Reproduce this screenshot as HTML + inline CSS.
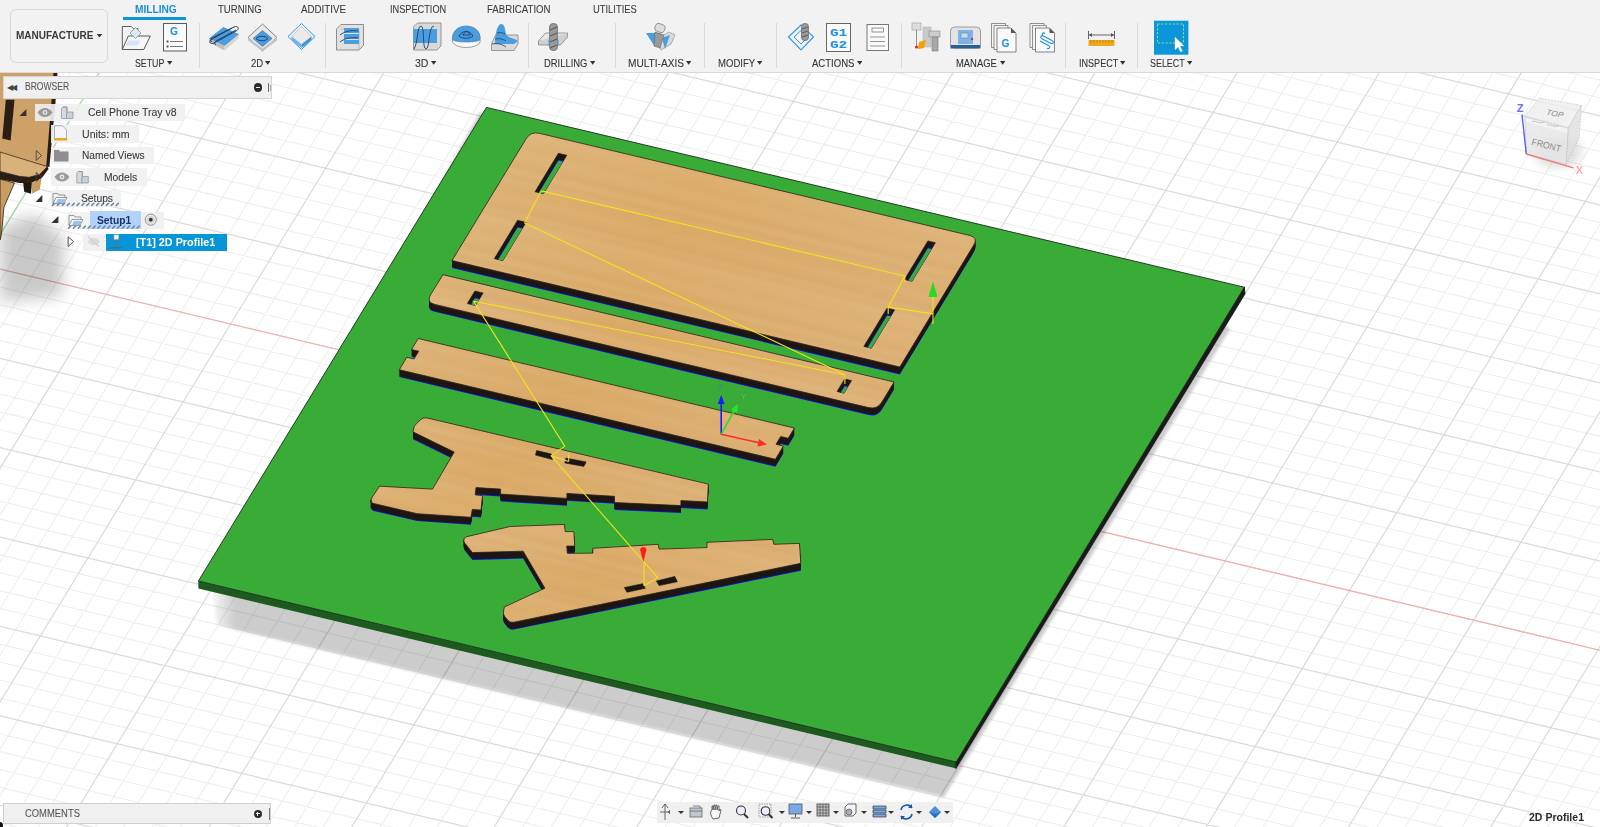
<!DOCTYPE html>
<html><head><meta charset="utf-8"><title>Fusion Manufacture</title>
<style>
html,body{margin:0;padding:0;width:1600px;height:827px;overflow:hidden;background:#fff;font-family:"Liberation Sans",sans-serif;}
#vp{position:absolute;left:0;top:0;width:1600px;height:827px;overflow:hidden}
</style></head><body>
<div id="vp"><svg width="1600" height="827" viewBox="0 0 1600 827" style="position:absolute;left:0;top:0">
<defs>
<filter id="blur2" x="-10%" y="-10%" width="120%" height="120%"><feGaussianBlur stdDeviation="1.6"/></filter>
<linearGradient id="shg" gradientUnits="userSpaceOnUse" x1="208" y1="0" x2="236" y2="0"><stop offset="0" stop-color="#000" stop-opacity="0"/><stop offset="1" stop-color="#000" stop-opacity="0.2"/></linearGradient>
<filter id="blur3" x="-10%" y="-10%" width="120%" height="120%"><feGaussianBlur stdDeviation="3"/></filter>
<filter id="blur5" x="-50%" y="-50%" width="200%" height="200%"><feGaussianBlur stdDeviation="5"/></filter>
<filter id="blur8" x="-50%" y="-50%" width="200%" height="200%"><feGaussianBlur stdDeviation="8"/></filter>
<filter id="blur12" x="-50%" y="-50%" width="200%" height="200%"><feGaussianBlur stdDeviation="12"/></filter>
<pattern id="grain" patternUnits="userSpaceOnUse" width="600" height="90" patternTransform="rotate(13.3)"><rect x="0" y="0.0" width="600" height="4.3" fill="#ffffff" opacity="0.009"/><rect x="0" y="4.3" width="600" height="2.9" fill="#a87838" opacity="0.032"/><rect x="0" y="7.2" width="600" height="5.7" fill="#ffffff" opacity="0.055"/><rect x="0" y="12.9" width="600" height="2.7" fill="#ffffff" opacity="0.026"/><rect x="0" y="15.6" width="600" height="3.8" fill="#ffffff" opacity="0.033"/><rect x="0" y="19.4" width="600" height="7.0" fill="#ffffff" opacity="0.007"/><rect x="0" y="26.5" width="600" height="6.0" fill="#ffffff" opacity="0.035"/><rect x="0" y="32.4" width="600" height="5.7" fill="#ffffff" opacity="0.024"/><rect x="0" y="38.1" width="600" height="2.8" fill="#a87838" opacity="0.052"/><rect x="0" y="40.9" width="600" height="4.8" fill="#a87838" opacity="0.032"/><rect x="0" y="45.7" width="600" height="5.6" fill="#ffffff" opacity="0.041"/><rect x="0" y="51.2" width="600" height="5.7" fill="#a87838" opacity="0.038"/><rect x="0" y="56.9" width="600" height="3.0" fill="#ffffff" opacity="0.043"/><rect x="0" y="60.0" width="600" height="5.9" fill="#a87838" opacity="0.030"/><rect x="0" y="65.9" width="600" height="6.8" fill="#a87838" opacity="0.028"/><rect x="0" y="72.7" width="600" height="4.5" fill="#ffffff" opacity="0.015"/><rect x="0" y="77.2" width="600" height="6.3" fill="#a87838" opacity="0.015"/><rect x="0" y="83.5" width="600" height="5.4" fill="#a87838" opacity="0.053"/><rect x="0" y="88.9" width="600" height="4.1" fill="#ffffff" opacity="0.059"/></pattern><filter id="gblur"><feGaussianBlur stdDeviation="1.5"/></filter>
<linearGradient id="wood" x1="0" y1="0" x2="1" y2="0.3"><stop offset="0" stop-color="#deb47a"/><stop offset="0.5" stop-color="#dbab69"/><stop offset="1" stop-color="#ddb074"/></linearGradient>
</defs>
<rect width="1600" height="827" fill="#fff"/>
<path d="M-818.4,-1172.7L-1968.6,695.6M-793.5,-1166.7L-1943.6,701.5M-768.7,-1160.8L-1918.6,707.5M-743.9,-1154.9L-1893.6,713.4M-694.2,-1143L-1843.6,725.3M-669.4,-1137.1L-1818.6,731.2M-644.5,-1131.1L-1793.7,737.2M-619.7,-1125.2L-1768.7,743.1M-570,-1113.3L-1718.7,755M-545.2,-1107.4L-1693.7,760.9M-520.4,-1101.4L-1668.7,766.9M-495.5,-1095.5L-1643.7,772.8M-445.9,-1083.6L-1593.8,784.7M-421,-1077.7L-1568.8,790.6M-396.2,-1071.8L-1543.8,796.6M-371.4,-1065.8L-1518.8,802.5M-321.7,-1054L-1468.8,814.4M-296.9,-1048L-1443.9,820.3M-272.1,-1042.1L-1418.9,826.2M-247.3,-1036.2L-1393.9,832.2M-197.6,-1024.3L-1343.9,844.1M-172.8,-1018.4L-1319,850M-148,-1012.5L-1294,855.9M-123.2,-1006.5L-1269,861.9M-73.5,-994.7L-1219.1,873.7M-48.7,-988.7L-1194.1,879.7M-23.9,-982.8L-1169.1,885.6M0.9,-976.9L-1144.2,891.6M50.5,-965L-1094.2,903.4M75.4,-959.1L-1069.2,909.4M100.2,-953.1L-1044.3,915.3M125,-947.2L-1019.3,921.2M174.6,-935.4L-969.4,933.1M199.4,-929.4L-944.4,939M224.2,-923.5L-919.4,945M249,-917.6L-894.5,950.9M298.6,-905.7L-844.6,962.8M323.5,-899.8L-819.6,968.7M348.3,-893.9L-794.6,974.6M373.1,-887.9L-769.7,980.6M422.7,-876.1L-719.8,992.4M447.5,-870.2L-694.8,998.4M472.3,-864.2L-669.8,1004.3M497.1,-858.3L-644.9,1010.2M546.7,-846.4L-595,1022.1M571.5,-840.5L-570,1028M596.3,-834.6L-545.1,1034M621.1,-828.7L-520.1,1039.9M670.7,-816.8L-470.2,1051.8M695.5,-810.9L-445.3,1057.7M720.3,-805L-420.3,1063.6M745,-799L-395.4,1069.6M794.6,-787.2L-345.5,1081.4M819.4,-781.3L-320.5,1087.3M844.2,-775.3L-295.6,1093.3M869,-769.4L-270.6,1099.2M918.6,-757.6L-220.7,1111.1M943.4,-751.6L-195.8,1117M968.2,-745.7L-170.8,1122.9M992.9,-739.8L-145.9,1128.9M1042.5,-727.9L-96,1140.7M1067.3,-722L-71.1,1146.6M1092.1,-716.1L-46.1,1152.6M1116.9,-710.2L-21.2,1158.5M1166.4,-698.3L28.7,1170.3M1191.2,-692.4L53.6,1176.3M1216,-686.5L78.5,1182.2M1240.8,-680.6L103.5,1188.1M1290.3,-668.7L153.3,1200M1315.1,-662.8L178.3,1205.9M1339.9,-656.9L203.2,1211.8M1364.7,-651L228.1,1217.8M1414.2,-639.1L278,1229.6M1439,-633.2L302.9,1235.5M1463.7,-627.3L327.9,1241.5M1488.5,-621.4L352.8,1247.4M1538.1,-609.5L402.6,1259.2M1562.8,-603.6L427.6,1265.2M1587.6,-597.7L452.5,1271.1M1612.4,-591.8L477.4,1277M1661.9,-579.9L527.3,1288.9M1686.7,-574L552.2,1294.8M1711.4,-568.1L577.1,1300.7M1736.2,-562.2L602,1306.6M1785.7,-550.3L651.9,1318.5M1810.5,-544.4L676.8,1324.4M1835.2,-538.5L701.7,1330.3M1860,-532.6L726.6,1336.3M1909.5,-520.8L776.4,1348.1M1934.3,-514.8L801.4,1354M1959,-508.9L826.3,1359.9M1983.8,-503L851.2,1365.9M2033.3,-491.2L901,1377.7M2058.1,-485.3L925.9,1383.6M2082.8,-479.3L950.8,1389.6M2107.6,-473.4L975.7,1395.5M2157.1,-461.6L1025.5,1407.3M2181.8,-455.7L1050.5,1413.2M2206.6,-449.8L1075.4,1419.2M2231.3,-443.8L1100.3,1425.1M2280.8,-432L1150.1,1436.9M2305.6,-426.1L1175,1442.8M2330.3,-420.2L1199.9,1448.8M2355.1,-414.3L1224.8,1454.7M2404.6,-402.4L1274.6,1466.5M2429.3,-396.5L1299.5,1472.4M2454.1,-390.6L1324.4,1478.4M2478.8,-384.7L1349.3,1484.3M2528.3,-372.9L1399.1,1496.1M2553,-367L1424,1502M2577.8,-361.1L1448.9,1507.9M2602.5,-355.1L1473.8,1513.9M2652,-343.3L1523.5,1525.7M2676.7,-337.4L1548.4,1531.6M2701.4,-331.5L1573.3,1537.5M2726.2,-325.6L1598.2,1543.4M2775.6,-313.8L1648,1555.3M2800.4,-307.9L1672.9,1561.2M2825.1,-301.9L1697.8,1567.1M2849.8,-296L1722.7,1573M2899.3,-284.2L1772.4,1584.9M2924,-278.3L1797.3,1590.8M2948.8,-272.4L1822.2,1596.7M2973.5,-266.5L1847.1,1602.6M3022.9,-254.7L1896.8,1614.4M3047.7,-248.8L1921.7,1620.3M3072.4,-242.8L1946.6,1626.3M3097.1,-236.9L1971.5,1632.2M3146.6,-225.1L2021.2,1644M3171.3,-219.2L2046.1,1649.9M3196,-213.3L2071,1655.8M3220.7,-207.4L2095.9,1661.7M3270.2,-195.6L2145.6,1673.6M3294.9,-189.7L2170.5,1679.5M3319.6,-183.8L2195.4,1685.4M3344.3,-177.9L2220.2,1691.3M3393.8,-166L2270,1703.1M3418.5,-160.1L2294.9,1709M3443.2,-154.2L2319.7,1715M3467.9,-148.3L2344.6,1720.9M3517.3,-136.5L2394.3,1732.7M3542,-130.6L2419.2,1738.6M3566.8,-124.7L2444.1,1744.5M3591.5,-118.8L2468.9,1750.4M3640.9,-107L2518.6,1762.2M3665.6,-101.1L2543.5,1768.2M3690.3,-95.2L2568.4,1774.1M3715,-89.3L2593.2,1780M3764.4,-77.5L2643,1791.8M3789.1,-71.6L2667.8,1797.7M3813.8,-65.7L2692.7,1803.6M3838.5,-59.8L2717.5,1809.5M-107.8,-985.1L3359.7,-156.5M-117.3,-969.6L3350.4,-141M-126.8,-954.1L3341.1,-125.5M-136.3,-938.6L3331.8,-110M-155.3,-907.7L3313.1,-79M-164.8,-892.2L3303.8,-63.5M-174.3,-876.7L3294.5,-48M-183.8,-861.2L3285.2,-32.5M-202.8,-830.2L3266.5,-1.5M-212.3,-814.7L3257.2,14M-221.8,-799.2L3247.9,29.5M-231.4,-783.7L3238.6,45M-250.4,-752.7L3219.9,76.1M-259.9,-737.2L3210.6,91.6M-269.4,-721.7L3201.3,107.1M-278.9,-706.1L3191.9,122.6M-297.9,-675.1L3173.3,153.6M-307.4,-659.6L3163.9,169.2M-317,-644.1L3154.6,184.7M-326.5,-628.6L3145.3,200.2M-345.5,-597.5L3126.6,231.3M-355,-582L3117.3,246.8M-364.5,-566.5L3107.9,262.3M-374.1,-551L3098.6,277.9M-393.1,-519.9L3079.9,308.9M-402.6,-504.4L3070.6,324.5M-412.1,-488.9L3061.2,340M-421.7,-473.3L3051.9,355.5M-440.7,-442.3L3033.2,386.6M-450.2,-426.7L3023.8,402.2M-459.8,-411.2L3014.5,417.7M-469.3,-395.6L3005.1,433.2M-488.4,-364.6L2986.4,464.3M-497.9,-349L2977.1,479.9M-507.4,-333.5L2967.7,495.4M-517,-317.9L2958.4,511M-536,-286.8L2939.7,542.1M-545.6,-271.3L2930.3,557.7M-555.1,-255.7L2921,573.2M-564.6,-240.2L2911.6,588.8M-583.7,-209.1L2892.9,619.9M-593.2,-193.5L2883.5,635.5M-602.8,-178L2874.2,651M-612.3,-162.4L2864.8,666.6M-631.4,-131.3L2846.1,697.7M-641,-115.7L2836.7,713.3M-650.5,-100.1L2827.4,728.9M-660,-84.6L2818,744.4M-679.1,-53.4L2799.3,775.6M-688.7,-37.9L2789.9,791.2M-698.2,-22.3L2780.5,806.8M-707.8,-6.7L2771.2,822.3M-726.9,24.4L2752.4,853.5M-736.5,40L2743.1,869.1M-746,55.6L2733.7,884.7M-755.6,71.2L2724.3,900.3M-774.7,102.4L2705.6,931.5M-784.2,117.9L2696.2,947M-793.8,133.5L2686.8,962.6M-803.3,149.1L2677.4,978.2M-822.5,180.3L2658.7,1009.4M-832,195.9L2649.3,1025M-841.6,211.5L2639.9,1040.6M-851.2,227.1L2630.5,1056.2M-870.3,258.3L2611.8,1087.4M-879.9,273.9L2602.4,1103.1M-889.4,289.5L2593,1118.7M-899,305.1L2583.6,1134.3M-918.1,336.3L2564.8,1165.5M-927.7,351.9L2555.4,1181.1M-937.3,367.5L2546.1,1196.7M-946.8,383.1L2536.7,1212.3M-966,414.4L2517.9,1243.6M-975.6,430L2508.5,1259.2M-985.1,445.6L2499.1,1274.8M-994.7,461.2L2489.7,1290.5M-1013.9,492.5L2470.9,1321.7M-1023.5,508.1L2461.5,1337.3M-1033,523.7L2452.1,1353M-1042.6,539.3L2442.7,1368.6M-1061.8,570.6L2423.9,1399.9M-1071.4,586.2L2414.5,1415.5M-1081,601.8L2405.1,1431.1M-1090.5,617.5L2395.7,1446.8M-1109.7,648.8L2376.9,1478.1M-1119.3,664.4L2367.5,1493.7M-1128.9,680L2358.1,1509.4M-1138.5,695.7L2348.7,1525M-1157.7,727L2329.8,1556.3M-1167.3,742.6L2320.4,1572M-1176.9,758.2L2311,1587.6M-1186.5,773.9L2301.6,1603.3M-1205.7,805.2L2282.8,1634.6M-1215.2,820.8L2273.4,1650.2M-1224.8,836.5L2263.9,1665.9M-1234.4,852.2L2254.5,1681.6M-1253.6,883.5L2235.7,1712.9M-1263.3,899.1L2226.3,1728.5M-1272.9,914.8L2216.9,1744.2M-1282.5,930.5L2207.4,1759.9M-1301.7,961.8L2188.6,1791.2M-1311.3,977.4L2179.2,1806.9M-1320.9,993.1L2169.7,1822.6M-1330.5,1008.8L2160.3,1838.2" stroke="#eeeeee" stroke-width="1.1" fill="none"/><path d="M-843.2,-1178.6L-1993.6,689.6M-719,-1148.9L-1868.6,719.3M-594.9,-1119.2L-1743.7,749M-470.7,-1089.6L-1618.7,778.7M-346.6,-1059.9L-1493.8,808.4M-222.4,-1030.2L-1368.9,838.1M-98.3,-1000.6L-1244,867.8M25.7,-970.9L-1119.2,897.5M149.8,-941.3L-994.3,927.2M273.8,-911.6L-869.5,956.8M397.9,-882L-744.7,986.5M521.9,-852.4L-619.9,1016.2M645.9,-822.7L-495.2,1045.8M769.8,-793.1L-370.4,1075.5M893.8,-763.5L-245.7,1105.1M1017.7,-733.9L-121,1134.8M1141.6,-704.3L3.7,1164.4M1265.5,-674.6L128.4,1194.1M1389.4,-645L253.1,1223.7M1513.3,-615.4L377.7,1253.3M1637.1,-585.8L502.3,1282.9M1761,-556.3L626.9,1312.6M1884.8,-526.7L751.5,1342.2M2008.6,-497.1L876.1,1371.8M2132.3,-467.5L1000.6,1401.4M2256.1,-437.9L1125.2,1431M2379.8,-408.4L1249.7,1460.6M2503.5,-378.8L1374.2,1490.2M2627.2,-349.2L1498.6,1519.8M2750.9,-319.7L1623.1,1549.4M2874.6,-290.1L1747.5,1578.9M2998.2,-260.6L1872,1608.5M3121.8,-231L1996.4,1638.1M3245.5,-201.5L2120.7,1667.7M3369,-172L2245.1,1697.2M3492.6,-142.4L2369.5,1726.8M3616.2,-112.9L2493.8,1756.3M3739.7,-83.4L2618.1,1785.9M-98.3,-1000.6L3369,-172M-145.8,-923.2L3322.5,-94.5M-193.3,-845.7L3275.9,-17M-240.9,-768.2L3229.2,60.6M-288.4,-690.6L3182.6,138.1M-336,-613.1L3135.9,215.7M-383.6,-535.4L3089.2,293.4M-431.2,-457.8L3042.5,371.1M-478.8,-380.1L2995.8,448.8M-526.5,-302.4L2949,526.5M-574.2,-224.6L2902.3,604.3M-621.9,-146.8L2855.5,682.2M-669.6,-69L2808.6,760M-717.3,8.9L2761.8,837.9M-765.1,86.8L2714.9,915.9M-812.9,164.7L2668.1,993.8M-860.7,242.7L2621.1,1071.8M-908.6,320.7L2574.2,1149.9M-956.4,398.7L2527.3,1228M-1004.3,476.8L2480.3,1306.1M-1052.2,555L2433.3,1384.2M-1100.1,633.1L2386.3,1462.4M-1148.1,711.3L2339.3,1540.7M-1196.1,789.5L2292.2,1618.9M-1244,867.8L2245.1,1697.2M-1292.1,946.1L2198,1775.6" stroke="#dadada" stroke-width="1.2" fill="none"/><path d="M-18.2,264.7L2714.9,915.9" stroke="#f8acac" stroke-width="1.1"/><path d="M-18.2,264.7L645.9,-822.7" stroke="#9be39b" stroke-width="1.2"/><polygon points="480,112 1196,298 1230,329 944,797 217,625 212,592" fill="url(#shg)" filter="url(#blur2)"/><polygon points="198.4,581 956.2,762 955.5,768.3 198.4,588.6" fill="#1d5a1f"/><polygon points="956.2,762 1244.3,287.2 1244.8,293.8 955.8,768.3" fill="#1b1b1b" stroke="#1b1b1b" stroke-width="1.2" stroke-linejoin="round"/><polygon points="486.4,107.4 1244.3,287.2 956.2,762 198.4,581" fill="#39ac38" stroke="#1c2a1c" stroke-width="0.9" stroke-linejoin="round"/><path d="M526,138.9Q530.7,131.2 539.4,133.3L969.6,235.4Q978.4,237.5 973.7,245.1L899.8,367L452,260.5Z" fill="#1010e0" transform="translate(0,7.4)"/><path d="M526,138.9Q530.7,131.2 539.4,133.3L969.6,235.4Q978.4,237.5 973.7,245.1L899.8,367L452,260.5Z" fill="#1c1512" transform="translate(0,0.5)"/><path d="M526,138.9Q530.7,131.2 539.4,133.3L969.6,235.4Q978.4,237.5 973.7,245.1L899.8,367L452,260.5Z" fill="#1c1512" transform="translate(0,1)"/><path d="M526,138.9Q530.7,131.2 539.4,133.3L969.6,235.4Q978.4,237.5 973.7,245.1L899.8,367L452,260.5Z" fill="#1c1512" transform="translate(0,1.5)"/><path d="M526,138.9Q530.7,131.2 539.4,133.3L969.6,235.4Q978.4,237.5 973.7,245.1L899.8,367L452,260.5Z" fill="#1c1512" transform="translate(0,2)"/><path d="M526,138.9Q530.7,131.2 539.4,133.3L969.6,235.4Q978.4,237.5 973.7,245.1L899.8,367L452,260.5Z" fill="#1c1512" transform="translate(0,2.5)"/><path d="M526,138.9Q530.7,131.2 539.4,133.3L969.6,235.4Q978.4,237.5 973.7,245.1L899.8,367L452,260.5Z" fill="#1c1512" transform="translate(0,3)"/><path d="M526,138.9Q530.7,131.2 539.4,133.3L969.6,235.4Q978.4,237.5 973.7,245.1L899.8,367L452,260.5Z" fill="#1c1512" transform="translate(0,3.5)"/><path d="M526,138.9Q530.7,131.2 539.4,133.3L969.6,235.4Q978.4,237.5 973.7,245.1L899.8,367L452,260.5Z" fill="#1c1512" transform="translate(0,4)"/><path d="M526,138.9Q530.7,131.2 539.4,133.3L969.6,235.4Q978.4,237.5 973.7,245.1L899.8,367L452,260.5Z" fill="#1c1512" transform="translate(0,4.5)"/><path d="M526,138.9Q530.7,131.2 539.4,133.3L969.6,235.4Q978.4,237.5 973.7,245.1L899.8,367L452,260.5Z" fill="#1c1512" transform="translate(0,5)"/><path d="M526,138.9Q530.7,131.2 539.4,133.3L969.6,235.4Q978.4,237.5 973.7,245.1L899.8,367L452,260.5Z" fill="#1c1512" transform="translate(0,5.5)"/><path d="M526,138.9Q530.7,131.2 539.4,133.3L969.6,235.4Q978.4,237.5 973.7,245.1L899.8,367L452,260.5Z" fill="#1c1512" transform="translate(0,6)"/><path d="M526,138.9Q530.7,131.2 539.4,133.3L969.6,235.4Q978.4,237.5 973.7,245.1L899.8,367L452,260.5Z" fill="#1c1512" transform="translate(0,6.5)"/><path d="M526,138.9Q530.7,131.2 539.4,133.3L969.6,235.4Q978.4,237.5 973.7,245.1L899.8,367L452,260.5Z" fill="url(#wood)" stroke="#2a2018" stroke-width="0.8" stroke-linejoin="round"/><path d="M526,138.9Q530.7,131.2 539.4,133.3L969.6,235.4Q978.4,237.5 973.7,245.1L899.8,367L452,260.5Z" fill="url(#grain)" filter="url(#gblur)"/><path d="M558.4,153.3L566.8,155.3L543.4,193.8L535,191.8Z" fill="#1c1512" stroke="#1a1a1a" stroke-width="0.6"/><clipPath id="c1"><path d="M558.4,153.3L566.8,155.3L543.4,193.8L535,191.8Z"/></clipPath><g clip-path="url(#c1)"><path d="M558.4,153.3L566.8,155.3L543.4,193.8L535,191.8Z" fill="#1010e0" transform="translate(0,6.2)"/><path d="M558.4,153.3L566.8,155.3L543.4,193.8L535,191.8Z" fill="#39ac38" transform="translate(0,7.3)"/></g><path d="M517.6,220.3L526.1,222.3L502.8,260.7L494.3,258.7Z" fill="#1c1512" stroke="#1a1a1a" stroke-width="0.6"/><clipPath id="c2"><path d="M517.6,220.3L526.1,222.3L502.8,260.7L494.3,258.7Z"/></clipPath><g clip-path="url(#c2)"><path d="M517.6,220.3L526.1,222.3L502.8,260.7L494.3,258.7Z" fill="#1010e0" transform="translate(0,6.2)"/><path d="M517.6,220.3L526.1,222.3L502.8,260.7L494.3,258.7Z" fill="#39ac38" transform="translate(0,7.3)"/></g><path d="M927.9,240.9L935.4,242.7L912,281.3L904.5,279.5Z" fill="#1c1512" stroke="#1a1a1a" stroke-width="0.6"/><clipPath id="c3"><path d="M927.9,240.9L935.4,242.7L912,281.3L904.5,279.5Z"/></clipPath><g clip-path="url(#c3)"><path d="M927.9,240.9L935.4,242.7L912,281.3L904.5,279.5Z" fill="#1010e0" transform="translate(0,6.2)"/><path d="M927.9,240.9L935.4,242.7L912,281.3L904.5,279.5Z" fill="#39ac38" transform="translate(0,7.3)"/></g><path d="M887.1,308.1L894.6,309.9L871.3,348.3L863.8,346.5Z" fill="#1c1512" stroke="#1a1a1a" stroke-width="0.6"/><clipPath id="c4"><path d="M887.1,308.1L894.6,309.9L871.3,348.3L863.8,346.5Z"/></clipPath><g clip-path="url(#c4)"><path d="M887.1,308.1L894.6,309.9L871.3,348.3L863.8,346.5Z" fill="#1010e0" transform="translate(0,6.2)"/><path d="M887.1,308.1L894.6,309.9L871.3,348.3L863.8,346.5Z" fill="#39ac38" transform="translate(0,7.3)"/></g><path d="M442.9,274.7L894.1,382L881.9,402Q877.3,409.7 868.5,407.6L434.8,304.4Q426,302.3 430.7,294.6Z" fill="#1010e0" transform="translate(0,7.4)"/><path d="M442.9,274.7L894.1,382L881.9,402Q877.3,409.7 868.5,407.6L434.8,304.4Q426,302.3 430.7,294.6Z" fill="#1c1512" transform="translate(0,0.5)"/><path d="M442.9,274.7L894.1,382L881.9,402Q877.3,409.7 868.5,407.6L434.8,304.4Q426,302.3 430.7,294.6Z" fill="#1c1512" transform="translate(0,1)"/><path d="M442.9,274.7L894.1,382L881.9,402Q877.3,409.7 868.5,407.6L434.8,304.4Q426,302.3 430.7,294.6Z" fill="#1c1512" transform="translate(0,1.5)"/><path d="M442.9,274.7L894.1,382L881.9,402Q877.3,409.7 868.5,407.6L434.8,304.4Q426,302.3 430.7,294.6Z" fill="#1c1512" transform="translate(0,2)"/><path d="M442.9,274.7L894.1,382L881.9,402Q877.3,409.7 868.5,407.6L434.8,304.4Q426,302.3 430.7,294.6Z" fill="#1c1512" transform="translate(0,2.5)"/><path d="M442.9,274.7L894.1,382L881.9,402Q877.3,409.7 868.5,407.6L434.8,304.4Q426,302.3 430.7,294.6Z" fill="#1c1512" transform="translate(0,3)"/><path d="M442.9,274.7L894.1,382L881.9,402Q877.3,409.7 868.5,407.6L434.8,304.4Q426,302.3 430.7,294.6Z" fill="#1c1512" transform="translate(0,3.5)"/><path d="M442.9,274.7L894.1,382L881.9,402Q877.3,409.7 868.5,407.6L434.8,304.4Q426,302.3 430.7,294.6Z" fill="#1c1512" transform="translate(0,4)"/><path d="M442.9,274.7L894.1,382L881.9,402Q877.3,409.7 868.5,407.6L434.8,304.4Q426,302.3 430.7,294.6Z" fill="#1c1512" transform="translate(0,4.5)"/><path d="M442.9,274.7L894.1,382L881.9,402Q877.3,409.7 868.5,407.6L434.8,304.4Q426,302.3 430.7,294.6Z" fill="#1c1512" transform="translate(0,5)"/><path d="M442.9,274.7L894.1,382L881.9,402Q877.3,409.7 868.5,407.6L434.8,304.4Q426,302.3 430.7,294.6Z" fill="#1c1512" transform="translate(0,5.5)"/><path d="M442.9,274.7L894.1,382L881.9,402Q877.3,409.7 868.5,407.6L434.8,304.4Q426,302.3 430.7,294.6Z" fill="#1c1512" transform="translate(0,6)"/><path d="M442.9,274.7L894.1,382L881.9,402Q877.3,409.7 868.5,407.6L434.8,304.4Q426,302.3 430.7,294.6Z" fill="#1c1512" transform="translate(0,6.5)"/><path d="M442.9,274.7L894.1,382L881.9,402Q877.3,409.7 868.5,407.6L434.8,304.4Q426,302.3 430.7,294.6Z" fill="url(#wood)" stroke="#2a2018" stroke-width="0.8" stroke-linejoin="round"/><path d="M442.9,274.7L894.1,382L881.9,402Q877.3,409.7 868.5,407.6L434.8,304.4Q426,302.3 430.7,294.6Z" fill="url(#grain)" filter="url(#gblur)"/><path d="M474.9,291L483.1,293L475.5,305.6L467.3,303.6Z" fill="#1c1512" stroke="#1a1a1a" stroke-width="0.6"/><clipPath id="c5"><path d="M474.9,291L483.1,293L475.5,305.6L467.3,303.6Z"/></clipPath><g clip-path="url(#c5)"><path d="M474.9,291L483.1,293L475.5,305.6L467.3,303.6Z" fill="#1010e0" transform="translate(0,6.2)"/><path d="M474.9,291L483.1,293L475.5,305.6L467.3,303.6Z" fill="#39ac38" transform="translate(0,7.3)"/></g><path d="M844.7,378.9L851.6,380.6L844,393.2L837,391.5Z" fill="#1c1512" stroke="#1a1a1a" stroke-width="0.6"/><clipPath id="c6"><path d="M844.7,378.9L851.6,380.6L844,393.2L837,391.5Z"/></clipPath><g clip-path="url(#c6)"><path d="M844.7,378.9L851.6,380.6L844,393.2L837,391.5Z" fill="#1010e0" transform="translate(0,6.2)"/><path d="M844.7,378.9L851.6,380.6L844,393.2L837,391.5Z" fill="#39ac38" transform="translate(0,7.3)"/></g><path d="M418.2,338.5L794.4,428L788.2,438.3L780.7,436.5L776,444.3L783.4,446.1L775.4,459.3L399.3,369.7L406.8,357.3L414,359L418.7,351.2L411.5,349.5Z" fill="#1010e0" transform="translate(0,7.4)"/><path d="M418.2,338.5L794.4,428L788.2,438.3L780.7,436.5L776,444.3L783.4,446.1L775.4,459.3L399.3,369.7L406.8,357.3L414,359L418.7,351.2L411.5,349.5Z" fill="#1c1512" transform="translate(0,0.5)"/><path d="M418.2,338.5L794.4,428L788.2,438.3L780.7,436.5L776,444.3L783.4,446.1L775.4,459.3L399.3,369.7L406.8,357.3L414,359L418.7,351.2L411.5,349.5Z" fill="#1c1512" transform="translate(0,1)"/><path d="M418.2,338.5L794.4,428L788.2,438.3L780.7,436.5L776,444.3L783.4,446.1L775.4,459.3L399.3,369.7L406.8,357.3L414,359L418.7,351.2L411.5,349.5Z" fill="#1c1512" transform="translate(0,1.5)"/><path d="M418.2,338.5L794.4,428L788.2,438.3L780.7,436.5L776,444.3L783.4,446.1L775.4,459.3L399.3,369.7L406.8,357.3L414,359L418.7,351.2L411.5,349.5Z" fill="#1c1512" transform="translate(0,2)"/><path d="M418.2,338.5L794.4,428L788.2,438.3L780.7,436.5L776,444.3L783.4,446.1L775.4,459.3L399.3,369.7L406.8,357.3L414,359L418.7,351.2L411.5,349.5Z" fill="#1c1512" transform="translate(0,2.5)"/><path d="M418.2,338.5L794.4,428L788.2,438.3L780.7,436.5L776,444.3L783.4,446.1L775.4,459.3L399.3,369.7L406.8,357.3L414,359L418.7,351.2L411.5,349.5Z" fill="#1c1512" transform="translate(0,3)"/><path d="M418.2,338.5L794.4,428L788.2,438.3L780.7,436.5L776,444.3L783.4,446.1L775.4,459.3L399.3,369.7L406.8,357.3L414,359L418.7,351.2L411.5,349.5Z" fill="#1c1512" transform="translate(0,3.5)"/><path d="M418.2,338.5L794.4,428L788.2,438.3L780.7,436.5L776,444.3L783.4,446.1L775.4,459.3L399.3,369.7L406.8,357.3L414,359L418.7,351.2L411.5,349.5Z" fill="#1c1512" transform="translate(0,4)"/><path d="M418.2,338.5L794.4,428L788.2,438.3L780.7,436.5L776,444.3L783.4,446.1L775.4,459.3L399.3,369.7L406.8,357.3L414,359L418.7,351.2L411.5,349.5Z" fill="#1c1512" transform="translate(0,4.5)"/><path d="M418.2,338.5L794.4,428L788.2,438.3L780.7,436.5L776,444.3L783.4,446.1L775.4,459.3L399.3,369.7L406.8,357.3L414,359L418.7,351.2L411.5,349.5Z" fill="#1c1512" transform="translate(0,5)"/><path d="M418.2,338.5L794.4,428L788.2,438.3L780.7,436.5L776,444.3L783.4,446.1L775.4,459.3L399.3,369.7L406.8,357.3L414,359L418.7,351.2L411.5,349.5Z" fill="#1c1512" transform="translate(0,5.5)"/><path d="M418.2,338.5L794.4,428L788.2,438.3L780.7,436.5L776,444.3L783.4,446.1L775.4,459.3L399.3,369.7L406.8,357.3L414,359L418.7,351.2L411.5,349.5Z" fill="#1c1512" transform="translate(0,6)"/><path d="M418.2,338.5L794.4,428L788.2,438.3L780.7,436.5L776,444.3L783.4,446.1L775.4,459.3L399.3,369.7L406.8,357.3L414,359L418.7,351.2L411.5,349.5Z" fill="#1c1512" transform="translate(0,6.5)"/><path d="M418.2,338.5L794.4,428L788.2,438.3L780.7,436.5L776,444.3L783.4,446.1L775.4,459.3L399.3,369.7L406.8,357.3L414,359L418.7,351.2L411.5,349.5Z" fill="url(#wood)" stroke="#2a2018" stroke-width="0.8" stroke-linejoin="round"/><path d="M418.2,338.5L794.4,428L788.2,438.3L780.7,436.5L776,444.3L783.4,446.1L775.4,459.3L399.3,369.7L406.8,357.3L414,359L418.7,351.2L411.5,349.5Z" fill="url(#grain)" filter="url(#gblur)"/><path d="M420.2,419.9Q423,417 426.9,417.9L708.3,484.1L707.5,502L680.9,500.5L680.9,505.6L614.5,502.5L614.5,496.3L566.9,493.4L566.9,498.4L500.6,494.1L500.6,489.1L476,487.6L475.2,494.9L482.5,495.6L481,510.1L472.3,509.4L470.9,517.3L417.2,513.7L373.7,503.5Q370.8,502.8 370.8,499.8L370.8,502.2Q370.8,499.2 372.5,496.7L379.5,486.2L432.5,489.1L454.2,452.1L412.9,431.8L414.3,426Z" fill="#1010e0" transform="translate(0,7.4)"/><path d="M420.2,419.9Q423,417 426.9,417.9L708.3,484.1L707.5,502L680.9,500.5L680.9,505.6L614.5,502.5L614.5,496.3L566.9,493.4L566.9,498.4L500.6,494.1L500.6,489.1L476,487.6L475.2,494.9L482.5,495.6L481,510.1L472.3,509.4L470.9,517.3L417.2,513.7L373.7,503.5Q370.8,502.8 370.8,499.8L370.8,502.2Q370.8,499.2 372.5,496.7L379.5,486.2L432.5,489.1L454.2,452.1L412.9,431.8L414.3,426Z" fill="#1c1512" transform="translate(0,0.5)"/><path d="M420.2,419.9Q423,417 426.9,417.9L708.3,484.1L707.5,502L680.9,500.5L680.9,505.6L614.5,502.5L614.5,496.3L566.9,493.4L566.9,498.4L500.6,494.1L500.6,489.1L476,487.6L475.2,494.9L482.5,495.6L481,510.1L472.3,509.4L470.9,517.3L417.2,513.7L373.7,503.5Q370.8,502.8 370.8,499.8L370.8,502.2Q370.8,499.2 372.5,496.7L379.5,486.2L432.5,489.1L454.2,452.1L412.9,431.8L414.3,426Z" fill="#1c1512" transform="translate(0,1)"/><path d="M420.2,419.9Q423,417 426.9,417.9L708.3,484.1L707.5,502L680.9,500.5L680.9,505.6L614.5,502.5L614.5,496.3L566.9,493.4L566.9,498.4L500.6,494.1L500.6,489.1L476,487.6L475.2,494.9L482.5,495.6L481,510.1L472.3,509.4L470.9,517.3L417.2,513.7L373.7,503.5Q370.8,502.8 370.8,499.8L370.8,502.2Q370.8,499.2 372.5,496.7L379.5,486.2L432.5,489.1L454.2,452.1L412.9,431.8L414.3,426Z" fill="#1c1512" transform="translate(0,1.5)"/><path d="M420.2,419.9Q423,417 426.9,417.9L708.3,484.1L707.5,502L680.9,500.5L680.9,505.6L614.5,502.5L614.5,496.3L566.9,493.4L566.9,498.4L500.6,494.1L500.6,489.1L476,487.6L475.2,494.9L482.5,495.6L481,510.1L472.3,509.4L470.9,517.3L417.2,513.7L373.7,503.5Q370.8,502.8 370.8,499.8L370.8,502.2Q370.8,499.2 372.5,496.7L379.5,486.2L432.5,489.1L454.2,452.1L412.9,431.8L414.3,426Z" fill="#1c1512" transform="translate(0,2)"/><path d="M420.2,419.9Q423,417 426.9,417.9L708.3,484.1L707.5,502L680.9,500.5L680.9,505.6L614.5,502.5L614.5,496.3L566.9,493.4L566.9,498.4L500.6,494.1L500.6,489.1L476,487.6L475.2,494.9L482.5,495.6L481,510.1L472.3,509.4L470.9,517.3L417.2,513.7L373.7,503.5Q370.8,502.8 370.8,499.8L370.8,502.2Q370.8,499.2 372.5,496.7L379.5,486.2L432.5,489.1L454.2,452.1L412.9,431.8L414.3,426Z" fill="#1c1512" transform="translate(0,2.5)"/><path d="M420.2,419.9Q423,417 426.9,417.9L708.3,484.1L707.5,502L680.9,500.5L680.9,505.6L614.5,502.5L614.5,496.3L566.9,493.4L566.9,498.4L500.6,494.1L500.6,489.1L476,487.6L475.2,494.9L482.5,495.6L481,510.1L472.3,509.4L470.9,517.3L417.2,513.7L373.7,503.5Q370.8,502.8 370.8,499.8L370.8,502.2Q370.8,499.2 372.5,496.7L379.5,486.2L432.5,489.1L454.2,452.1L412.9,431.8L414.3,426Z" fill="#1c1512" transform="translate(0,3)"/><path d="M420.2,419.9Q423,417 426.9,417.9L708.3,484.1L707.5,502L680.9,500.5L680.9,505.6L614.5,502.5L614.5,496.3L566.9,493.4L566.9,498.4L500.6,494.1L500.6,489.1L476,487.6L475.2,494.9L482.5,495.6L481,510.1L472.3,509.4L470.9,517.3L417.2,513.7L373.7,503.5Q370.8,502.8 370.8,499.8L370.8,502.2Q370.8,499.2 372.5,496.7L379.5,486.2L432.5,489.1L454.2,452.1L412.9,431.8L414.3,426Z" fill="#1c1512" transform="translate(0,3.5)"/><path d="M420.2,419.9Q423,417 426.9,417.9L708.3,484.1L707.5,502L680.9,500.5L680.9,505.6L614.5,502.5L614.5,496.3L566.9,493.4L566.9,498.4L500.6,494.1L500.6,489.1L476,487.6L475.2,494.9L482.5,495.6L481,510.1L472.3,509.4L470.9,517.3L417.2,513.7L373.7,503.5Q370.8,502.8 370.8,499.8L370.8,502.2Q370.8,499.2 372.5,496.7L379.5,486.2L432.5,489.1L454.2,452.1L412.9,431.8L414.3,426Z" fill="#1c1512" transform="translate(0,4)"/><path d="M420.2,419.9Q423,417 426.9,417.9L708.3,484.1L707.5,502L680.9,500.5L680.9,505.6L614.5,502.5L614.5,496.3L566.9,493.4L566.9,498.4L500.6,494.1L500.6,489.1L476,487.6L475.2,494.9L482.5,495.6L481,510.1L472.3,509.4L470.9,517.3L417.2,513.7L373.7,503.5Q370.8,502.8 370.8,499.8L370.8,502.2Q370.8,499.2 372.5,496.7L379.5,486.2L432.5,489.1L454.2,452.1L412.9,431.8L414.3,426Z" fill="#1c1512" transform="translate(0,4.5)"/><path d="M420.2,419.9Q423,417 426.9,417.9L708.3,484.1L707.5,502L680.9,500.5L680.9,505.6L614.5,502.5L614.5,496.3L566.9,493.4L566.9,498.4L500.6,494.1L500.6,489.1L476,487.6L475.2,494.9L482.5,495.6L481,510.1L472.3,509.4L470.9,517.3L417.2,513.7L373.7,503.5Q370.8,502.8 370.8,499.8L370.8,502.2Q370.8,499.2 372.5,496.7L379.5,486.2L432.5,489.1L454.2,452.1L412.9,431.8L414.3,426Z" fill="#1c1512" transform="translate(0,5)"/><path d="M420.2,419.9Q423,417 426.9,417.9L708.3,484.1L707.5,502L680.9,500.5L680.9,505.6L614.5,502.5L614.5,496.3L566.9,493.4L566.9,498.4L500.6,494.1L500.6,489.1L476,487.6L475.2,494.9L482.5,495.6L481,510.1L472.3,509.4L470.9,517.3L417.2,513.7L373.7,503.5Q370.8,502.8 370.8,499.8L370.8,502.2Q370.8,499.2 372.5,496.7L379.5,486.2L432.5,489.1L454.2,452.1L412.9,431.8L414.3,426Z" fill="#1c1512" transform="translate(0,5.5)"/><path d="M420.2,419.9Q423,417 426.9,417.9L708.3,484.1L707.5,502L680.9,500.5L680.9,505.6L614.5,502.5L614.5,496.3L566.9,493.4L566.9,498.4L500.6,494.1L500.6,489.1L476,487.6L475.2,494.9L482.5,495.6L481,510.1L472.3,509.4L470.9,517.3L417.2,513.7L373.7,503.5Q370.8,502.8 370.8,499.8L370.8,502.2Q370.8,499.2 372.5,496.7L379.5,486.2L432.5,489.1L454.2,452.1L412.9,431.8L414.3,426Z" fill="#1c1512" transform="translate(0,6)"/><path d="M420.2,419.9Q423,417 426.9,417.9L708.3,484.1L707.5,502L680.9,500.5L680.9,505.6L614.5,502.5L614.5,496.3L566.9,493.4L566.9,498.4L500.6,494.1L500.6,489.1L476,487.6L475.2,494.9L482.5,495.6L481,510.1L472.3,509.4L470.9,517.3L417.2,513.7L373.7,503.5Q370.8,502.8 370.8,499.8L370.8,502.2Q370.8,499.2 372.5,496.7L379.5,486.2L432.5,489.1L454.2,452.1L412.9,431.8L414.3,426Z" fill="#1c1512" transform="translate(0,6.5)"/><path d="M420.2,419.9Q423,417 426.9,417.9L708.3,484.1L707.5,502L680.9,500.5L680.9,505.6L614.5,502.5L614.5,496.3L566.9,493.4L566.9,498.4L500.6,494.1L500.6,489.1L476,487.6L475.2,494.9L482.5,495.6L481,510.1L472.3,509.4L470.9,517.3L417.2,513.7L373.7,503.5Q370.8,502.8 370.8,499.8L370.8,502.2Q370.8,499.2 372.5,496.7L379.5,486.2L432.5,489.1L454.2,452.1L412.9,431.8L414.3,426Z" fill="url(#wood)" stroke="#2a2018" stroke-width="0.8" stroke-linejoin="round"/><path d="M420.2,419.9Q423,417 426.9,417.9L708.3,484.1L707.5,502L680.9,500.5L680.9,505.6L614.5,502.5L614.5,496.3L566.9,493.4L566.9,498.4L500.6,494.1L500.6,489.1L476,487.6L475.2,494.9L482.5,495.6L481,510.1L472.3,509.4L470.9,517.3L417.2,513.7L373.7,503.5Q370.8,502.8 370.8,499.8L370.8,502.2Q370.8,499.2 372.5,496.7L379.5,486.2L432.5,489.1L454.2,452.1L412.9,431.8L414.3,426Z" fill="url(#grain)" filter="url(#gblur)"/><path d="M536.6,450.6L551.3,454L552.4,459.6L535.5,455.1Z" fill="#1c1512" stroke="#1a1a1a" stroke-width="0.6"/><path d="M565.9,458L586.1,461.9L583.9,466.4L564.8,463Z" fill="#1c1512" stroke="#1a1a1a" stroke-width="0.6"/><path d="M463.7,540.4Q463.7,537.4 466.6,536.7L510.1,526.5L564.5,524.4L565.2,531.6L573.9,531.6L574.7,546.1L566.7,546.1L567.4,553.4L592.8,553.1L592.8,548.3L658.4,544.3L659.1,549.1L707,547.6L707,542.3L772.6,539.4L773.9,544.3L799.5,543.4L800.8,563.3L514,622.2Q510.1,623 507.5,619.9L504.8,616.6Q502.9,614.3 503.5,611.4L504.3,607L544.9,588.2L523.2,551.2L472.4,552.6L465,543.4Q463.7,541.8 463.7,539.8Z" fill="#1010e0" transform="translate(0,7.4)"/><path d="M463.7,540.4Q463.7,537.4 466.6,536.7L510.1,526.5L564.5,524.4L565.2,531.6L573.9,531.6L574.7,546.1L566.7,546.1L567.4,553.4L592.8,553.1L592.8,548.3L658.4,544.3L659.1,549.1L707,547.6L707,542.3L772.6,539.4L773.9,544.3L799.5,543.4L800.8,563.3L514,622.2Q510.1,623 507.5,619.9L504.8,616.6Q502.9,614.3 503.5,611.4L504.3,607L544.9,588.2L523.2,551.2L472.4,552.6L465,543.4Q463.7,541.8 463.7,539.8Z" fill="#1c1512" transform="translate(0,0.5)"/><path d="M463.7,540.4Q463.7,537.4 466.6,536.7L510.1,526.5L564.5,524.4L565.2,531.6L573.9,531.6L574.7,546.1L566.7,546.1L567.4,553.4L592.8,553.1L592.8,548.3L658.4,544.3L659.1,549.1L707,547.6L707,542.3L772.6,539.4L773.9,544.3L799.5,543.4L800.8,563.3L514,622.2Q510.1,623 507.5,619.9L504.8,616.6Q502.9,614.3 503.5,611.4L504.3,607L544.9,588.2L523.2,551.2L472.4,552.6L465,543.4Q463.7,541.8 463.7,539.8Z" fill="#1c1512" transform="translate(0,1)"/><path d="M463.7,540.4Q463.7,537.4 466.6,536.7L510.1,526.5L564.5,524.4L565.2,531.6L573.9,531.6L574.7,546.1L566.7,546.1L567.4,553.4L592.8,553.1L592.8,548.3L658.4,544.3L659.1,549.1L707,547.6L707,542.3L772.6,539.4L773.9,544.3L799.5,543.4L800.8,563.3L514,622.2Q510.1,623 507.5,619.9L504.8,616.6Q502.9,614.3 503.5,611.4L504.3,607L544.9,588.2L523.2,551.2L472.4,552.6L465,543.4Q463.7,541.8 463.7,539.8Z" fill="#1c1512" transform="translate(0,1.5)"/><path d="M463.7,540.4Q463.7,537.4 466.6,536.7L510.1,526.5L564.5,524.4L565.2,531.6L573.9,531.6L574.7,546.1L566.7,546.1L567.4,553.4L592.8,553.1L592.8,548.3L658.4,544.3L659.1,549.1L707,547.6L707,542.3L772.6,539.4L773.9,544.3L799.5,543.4L800.8,563.3L514,622.2Q510.1,623 507.5,619.9L504.8,616.6Q502.9,614.3 503.5,611.4L504.3,607L544.9,588.2L523.2,551.2L472.4,552.6L465,543.4Q463.7,541.8 463.7,539.8Z" fill="#1c1512" transform="translate(0,2)"/><path d="M463.7,540.4Q463.7,537.4 466.6,536.7L510.1,526.5L564.5,524.4L565.2,531.6L573.9,531.6L574.7,546.1L566.7,546.1L567.4,553.4L592.8,553.1L592.8,548.3L658.4,544.3L659.1,549.1L707,547.6L707,542.3L772.6,539.4L773.9,544.3L799.5,543.4L800.8,563.3L514,622.2Q510.1,623 507.5,619.9L504.8,616.6Q502.9,614.3 503.5,611.4L504.3,607L544.9,588.2L523.2,551.2L472.4,552.6L465,543.4Q463.7,541.8 463.7,539.8Z" fill="#1c1512" transform="translate(0,2.5)"/><path d="M463.7,540.4Q463.7,537.4 466.6,536.7L510.1,526.5L564.5,524.4L565.2,531.6L573.9,531.6L574.7,546.1L566.7,546.1L567.4,553.4L592.8,553.1L592.8,548.3L658.4,544.3L659.1,549.1L707,547.6L707,542.3L772.6,539.4L773.9,544.3L799.5,543.4L800.8,563.3L514,622.2Q510.1,623 507.5,619.9L504.8,616.6Q502.9,614.3 503.5,611.4L504.3,607L544.9,588.2L523.2,551.2L472.4,552.6L465,543.4Q463.7,541.8 463.7,539.8Z" fill="#1c1512" transform="translate(0,3)"/><path d="M463.7,540.4Q463.7,537.4 466.6,536.7L510.1,526.5L564.5,524.4L565.2,531.6L573.9,531.6L574.7,546.1L566.7,546.1L567.4,553.4L592.8,553.1L592.8,548.3L658.4,544.3L659.1,549.1L707,547.6L707,542.3L772.6,539.4L773.9,544.3L799.5,543.4L800.8,563.3L514,622.2Q510.1,623 507.5,619.9L504.8,616.6Q502.9,614.3 503.5,611.4L504.3,607L544.9,588.2L523.2,551.2L472.4,552.6L465,543.4Q463.7,541.8 463.7,539.8Z" fill="#1c1512" transform="translate(0,3.5)"/><path d="M463.7,540.4Q463.7,537.4 466.6,536.7L510.1,526.5L564.5,524.4L565.2,531.6L573.9,531.6L574.7,546.1L566.7,546.1L567.4,553.4L592.8,553.1L592.8,548.3L658.4,544.3L659.1,549.1L707,547.6L707,542.3L772.6,539.4L773.9,544.3L799.5,543.4L800.8,563.3L514,622.2Q510.1,623 507.5,619.9L504.8,616.6Q502.9,614.3 503.5,611.4L504.3,607L544.9,588.2L523.2,551.2L472.4,552.6L465,543.4Q463.7,541.8 463.7,539.8Z" fill="#1c1512" transform="translate(0,4)"/><path d="M463.7,540.4Q463.7,537.4 466.6,536.7L510.1,526.5L564.5,524.4L565.2,531.6L573.9,531.6L574.7,546.1L566.7,546.1L567.4,553.4L592.8,553.1L592.8,548.3L658.4,544.3L659.1,549.1L707,547.6L707,542.3L772.6,539.4L773.9,544.3L799.5,543.4L800.8,563.3L514,622.2Q510.1,623 507.5,619.9L504.8,616.6Q502.9,614.3 503.5,611.4L504.3,607L544.9,588.2L523.2,551.2L472.4,552.6L465,543.4Q463.7,541.8 463.7,539.8Z" fill="#1c1512" transform="translate(0,4.5)"/><path d="M463.7,540.4Q463.7,537.4 466.6,536.7L510.1,526.5L564.5,524.4L565.2,531.6L573.9,531.6L574.7,546.1L566.7,546.1L567.4,553.4L592.8,553.1L592.8,548.3L658.4,544.3L659.1,549.1L707,547.6L707,542.3L772.6,539.4L773.9,544.3L799.5,543.4L800.8,563.3L514,622.2Q510.1,623 507.5,619.9L504.8,616.6Q502.9,614.3 503.5,611.4L504.3,607L544.9,588.2L523.2,551.2L472.4,552.6L465,543.4Q463.7,541.8 463.7,539.8Z" fill="#1c1512" transform="translate(0,5)"/><path d="M463.7,540.4Q463.7,537.4 466.6,536.7L510.1,526.5L564.5,524.4L565.2,531.6L573.9,531.6L574.7,546.1L566.7,546.1L567.4,553.4L592.8,553.1L592.8,548.3L658.4,544.3L659.1,549.1L707,547.6L707,542.3L772.6,539.4L773.9,544.3L799.5,543.4L800.8,563.3L514,622.2Q510.1,623 507.5,619.9L504.8,616.6Q502.9,614.3 503.5,611.4L504.3,607L544.9,588.2L523.2,551.2L472.4,552.6L465,543.4Q463.7,541.8 463.7,539.8Z" fill="#1c1512" transform="translate(0,5.5)"/><path d="M463.7,540.4Q463.7,537.4 466.6,536.7L510.1,526.5L564.5,524.4L565.2,531.6L573.9,531.6L574.7,546.1L566.7,546.1L567.4,553.4L592.8,553.1L592.8,548.3L658.4,544.3L659.1,549.1L707,547.6L707,542.3L772.6,539.4L773.9,544.3L799.5,543.4L800.8,563.3L514,622.2Q510.1,623 507.5,619.9L504.8,616.6Q502.9,614.3 503.5,611.4L504.3,607L544.9,588.2L523.2,551.2L472.4,552.6L465,543.4Q463.7,541.8 463.7,539.8Z" fill="#1c1512" transform="translate(0,6)"/><path d="M463.7,540.4Q463.7,537.4 466.6,536.7L510.1,526.5L564.5,524.4L565.2,531.6L573.9,531.6L574.7,546.1L566.7,546.1L567.4,553.4L592.8,553.1L592.8,548.3L658.4,544.3L659.1,549.1L707,547.6L707,542.3L772.6,539.4L773.9,544.3L799.5,543.4L800.8,563.3L514,622.2Q510.1,623 507.5,619.9L504.8,616.6Q502.9,614.3 503.5,611.4L504.3,607L544.9,588.2L523.2,551.2L472.4,552.6L465,543.4Q463.7,541.8 463.7,539.8Z" fill="#1c1512" transform="translate(0,6.5)"/><path d="M463.7,540.4Q463.7,537.4 466.6,536.7L510.1,526.5L564.5,524.4L565.2,531.6L573.9,531.6L574.7,546.1L566.7,546.1L567.4,553.4L592.8,553.1L592.8,548.3L658.4,544.3L659.1,549.1L707,547.6L707,542.3L772.6,539.4L773.9,544.3L799.5,543.4L800.8,563.3L514,622.2Q510.1,623 507.5,619.9L504.8,616.6Q502.9,614.3 503.5,611.4L504.3,607L544.9,588.2L523.2,551.2L472.4,552.6L465,543.4Q463.7,541.8 463.7,539.8Z" fill="url(#wood)" stroke="#2a2018" stroke-width="0.8" stroke-linejoin="round"/><path d="M463.7,540.4Q463.7,537.4 466.6,536.7L510.1,526.5L564.5,524.4L565.2,531.6L573.9,531.6L574.7,546.1L566.7,546.1L567.4,553.4L592.8,553.1L592.8,548.3L658.4,544.3L659.1,549.1L707,547.6L707,542.3L772.6,539.4L773.9,544.3L799.5,543.4L800.8,563.3L514,622.2Q510.1,623 507.5,619.9L504.8,616.6Q502.9,614.3 503.5,611.4L504.3,607L544.9,588.2L523.2,551.2L472.4,552.6L465,543.4Q463.7,541.8 463.7,539.8Z" fill="url(#grain)" filter="url(#gblur)"/><path d="M624.3,587.6L642.7,583.7L645.3,588.3L626.9,592.2Z" fill="#1c1512" stroke="#1a1a1a" stroke-width="0.6"/><path d="M656.4,581L674.8,576.4L677.4,581.7L659.1,585.6Z" fill="#1c1512" stroke="#1a1a1a" stroke-width="0.6"/><polyline points="541.2,190.9 904.8,276 888.2,307 933,313.9" fill="none" stroke="#f2e21a" stroke-width="1.1"/><polyline points="541.2,190.9 524.6,223 844.9,374.7" fill="none" stroke="#f2e21a" stroke-width="1.1"/><polyline points="844.9,374.7 473.5,301.2 564.8,446.1 551.2,455.8 568.7,461.6" fill="none" stroke="#f2e21a" stroke-width="1.1"/><polyline points="551.2,455.8 644.1,562.2 644,585.4" fill="none" stroke="#f2e21a" stroke-width="1.1"/><polyline points="644.1,562.2 657.7,577.7 644,585.4" fill="none" stroke="#f2e21a" stroke-width="1.1"/><polyline points="933,293 933,324" fill="none" stroke="#f2e21a" stroke-width="1.1"/><polyline points="904.8,276 904.8,282" fill="none" stroke="#f2e21a" stroke-width="1.1"/><polyline points="888.2,307 888.2,314" fill="none" stroke="#f2e21a" stroke-width="1.1"/><polyline points="844.9,374.7 844.9,384" fill="none" stroke="#f2e21a" stroke-width="1.1"/><polyline points="568.7,453.6 568.7,461.6" fill="none" stroke="#f2e21a" stroke-width="1.1"/><polygon points="928.5,297 933,281.5 937.5,297" fill="#22dd22"/><path d="M640,549Q643.3,545 646.6,549L643.3,562Z" fill="#ff1a1a"/><g><path d="M721.2,434.3L721.2,401" stroke="#1a1aff" stroke-width="1.6"/><polygon points="717.8,404 721.2,395 724.6,404" fill="#1a1aff"/><path d="M721.2,434.3L735,409" stroke="#2ee02e" stroke-width="1.6"/><polygon points="731,409.5 737.7,404 737.5,413" fill="#2ee02e"/><path d="M721.2,434.3L760,443" stroke="#ff2a2a" stroke-width="1.6"/><polygon points="759,439 767,444.6 757.5,446.5" fill="#ff2a2a"/><text x="718" y="389" font-size="8" fill="#4a6fd8" opacity="0.7" font-family="Liberation Sans">Z</text><text x="741" y="399" font-size="8" fill="#5fcf5f" opacity="0.7" font-family="Liberation Sans">Y</text></g><g><polygon points="0,228 34,214 64,238 62,296 0,302" fill="#000" opacity="0.21" filter="url(#blur8)"/><polygon points="0,72 57,72 53.2,100.8 47.4,166.6 0,166" fill="#cda168"/><polygon points="53.5,72 57.5,72 55.6,100.8 49.4,167 46.2,166.6 51.5,100.8" fill="#2a1d14"/><polygon points="5.8,99.8 14.5,99.8 10.6,140.5 2.3,138.5" fill="#2a1d14"/><polygon points="0,152 47.4,166.6 39.7,174.4 29,177.3 19.4,176.3 0,171.4" fill="#d8b27a" stroke="#2a1d14" stroke-width="0.7"/><polygon points="0,171.4 19.4,176.3 29,177.3 39.7,174.4 47.4,166.6 48.6,169 41.6,178.2 31,183 19.4,183 0,179.2" fill="#2a1d14"/><polygon points="23.2,183 31.9,183 31,193.7 24.2,191.8" fill="#22170f"/><polygon points="31.9,183 41.6,178.5 39.7,189.8 31.9,193.7" fill="#c99c60"/><polygon points="0,179.2 14.5,183 3.9,207.3 1.5,234.3 0,240" fill="#c99c60" stroke="#2a1d14" stroke-width="0.8"/></g><g><ellipse cx="1558" cy="152" rx="24" ry="16" fill="#000" opacity="0.12" filter="url(#blur5)"/><polygon points="1524.8,116.3 1568.4,127.9 1566.2,164.2 1526.3,154" fill="#e6e6e6" fill-opacity="0.8" stroke="#c4c4c4" stroke-width="0.6"/><polygon points="1524.8,116.3 1539.3,98.1 1581.4,105.4 1568.4,127.9" fill="#eeeeee" fill-opacity="0.8" stroke="#bdbdbd" stroke-width="0.6" stroke-dasharray="2,1.2"/><polygon points="1568.4,127.9 1581.4,105.4 1579.2,138.1 1566.2,164.2" fill="#dedede" fill-opacity="0.8" stroke="#bdbdbd" stroke-width="0.6" stroke-dasharray="2,1.2"/><polygon points="1526,118 1567,129 1566.8,133 1526.3,122" fill="#f6f6f6" opacity="0.7"/><path d="M1532,121.5q3,-1 6,1q3,1 6,-0.5M1547,125q3,-1 6,1q3,1 6,-0.5" stroke="#9a9a9a" stroke-width="0.5" fill="none"/><text transform="translate(1545.5,114.5) rotate(11) skewX(-14)" font-size="8" fill="#8a8a8a" font-family="Liberation Sans" textLength="17" lengthAdjust="spacingAndGlyphs">TOP</text><text transform="translate(1531,144.8) rotate(14)" font-size="9.4" fill="#8a8a8a" font-family="Liberation Sans" textLength="30" lengthAdjust="spacingAndGlyphs">FRONT</text><path d="M1522,114.5L1526.3,154" stroke="#5b5bff" stroke-width="1.4"/><path d="M1526.3,154L1573.4,167.8" stroke="#f07a7a" stroke-width="1.4"/><text x="1516.8" y="112.3" font-size="11" fill="#6a6aff" font-family="Liberation Sans" font-weight="bold">Z</text><text x="1575.8" y="174.3" font-size="11" fill="#ff8585" font-family="Liberation Sans">X</text></g>
</svg></div>
<style>
.tb{position:absolute;left:0;top:0;width:1600px;height:72px;background:#f2f2f2;border-bottom:1px solid #d9d9d9}
.tab{position:absolute;top:3px;font-size:9.6px;line-height:12px;color:#3d3d3d;white-space:nowrap;letter-spacing:0.1px}
.grp{position:absolute;top:57px;font-size:9.4px;line-height:12px;color:#333;white-space:nowrap}
.grp i{display:inline-block;width:0;height:0;border-left:2.6px solid transparent;border-right:2.6px solid transparent;border-top:3.2px solid #333;margin-left:2px;vertical-align:1.5px}
.sep{position:absolute;top:23px;width:1px;height:45px;background:#d9d9d9}
.ic{position:absolute}
.bp{position:absolute;background:#f0f0f0;border:1px solid #cfcfcf;box-sizing:border-box}
.row{position:absolute;background:rgba(240,240,240,0.92);height:17.5px}
.rt{position:absolute;font-size:10.4px;line-height:12px;color:#373737;white-space:nowrap}
</style>
<div class="tb"></div>
<div style="position:absolute;left:9.5px;top:8.5px;width:98px;height:54.5px;border:1px solid #d7d7d7;border-radius:6px;box-sizing:border-box"></div>
<div style="position:absolute;left:97px;top:34px;width:0;height:0;border-left:2.8px solid transparent;border-right:2.8px solid transparent;border-top:3.6px solid #3a3a3a"></div>

<div style="position:absolute;left:123.2px;top:17px;width:63.3px;height:3px;background:#0a96d8"></div>

<div class="sep" style="left:198.5px"></div>
<div class="sep" style="left:324.5px"></div>
<div class="sep" style="left:528px"></div>
<div class="sep" style="left:615px"></div>
<div class="sep" style="left:704px"></div>
<div class="sep" style="left:775.5px"></div>
<div class="sep" style="left:901px"></div>
<div class="sep" style="left:1065px"></div>
<div class="sep" style="left:1136.5px"></div>


<svg class="ic" style="left:0;top:0" width="1600" height="72" viewBox="0 0 1600 72">
<!-- setup folder -->
<g stroke="#5a5a5a" stroke-width="1" fill="#f6f6f6">
<path d="M122.3,26.5h9l2,2h4.5v3.5"/>
<path d="M122.3,26.5V49.5h21.5l6.5-13.5h-22l-6,13.5" />
<path d="M130,33l5.5-5.5l5.5,5.5l-5.5,5.5z" fill="#dce8f4" stroke="#8aa"/>
</g>
<path d="M128.5,40.5h12l-3,5h-12z" fill="#cfe0f2" opacity="0.8"/>
<!-- G doc -->
<rect x="163.5" y="23.5" width="23" height="27.5" fill="#fafafa" stroke="#5a5a5a" stroke-width="1"/>
<text x="170" y="35" font-family="Liberation Sans" font-weight="bold" font-size="10" fill="#1e8fe0">G</text>
<rect x="166.5" y="40.5" width="2" height="2" fill="#555"/><path d="M170,41.5h13" stroke="#777" stroke-width="1"/>
<rect x="166.5" y="45.5" width="2" height="2" fill="#555"/><path d="M170,46.5h13" stroke="#777" stroke-width="1"/>
<!-- 2D adaptive -->
<path d="M209.5,38.5l14-11l15,7l-14,11.5z" fill="#4a9ee0" stroke="#3a6e98" stroke-width="0.6"/>
<path d="M209.5,38.5v4l15,8v-5z" fill="#bdbdbd"/><path d="M224.5,50.5l14-12v-4l-14,11.5z" fill="#d5d5d5"/>
<path d="M212,42c-3-2,0-5,2-5l20-10c4-2,6,2,2,4l-22,12c-4,2-6-2-2-4l20-11M216,45c-3-2,0-5,2-5l18-10" fill="none" stroke="#1c3f66" stroke-width="1"/>
<!-- 2D pocket -->
<path d="M248,37.5l14.5-13.5l14.5,13.5l-14.5,13.5z" fill="#e8e8e8" stroke="#6a6a6a" stroke-width="0.8"/>
<path d="M248,37.5v3l14.5,11v-3zM277,37.5v3l-14.5,11v-3z" fill="#c4c4c4"/>
<path d="M253,38.5l9.5-8l9.5,8l-9.5,8z" fill="#4a9ee0" stroke="#3a6e98" stroke-width="0.6"/>
<path d="M256,38.5c3-3,9-3,12,0c-3,3-9,3-12,0z" fill="none" stroke="#1c3f66" stroke-width="1"/>
<!-- 2D contour -->
<path d="M288,36.5l13.5,13l13.5-13l-13.5-13z" fill="none" stroke="#2d9af0" stroke-width="1"/>
<path d="M291.5,36.5l10-10l10,10l-10,8z" fill="#eaeaea" stroke="#aaa" stroke-width="0.5"/>
<path d="M291.5,36.5l10,8v3.5l-10-8z" fill="#6fb2ea"/><path d="M311.5,36.5l-10,8v3.5l10-8z" fill="#3d92db"/>
<!-- 3D box -->
<path d="M336.5,29l4.5-4.5h22.5v21l-4.5,4.5h-22.5z" fill="#e1e1e1" stroke="#777" stroke-width="0.8"/>
<path d="M341,29h18v21" fill="none" stroke="#999" stroke-width="0.5"/>
<path d="M344,28h15v5h-15zM344,34h15v5h-15zM344,40h15v4h-15z" fill="#4a9ee0"/>
<path d="M340,35c5-4,12-5,18-4M340,42c5-4,12-5,18-4" stroke="#1c3f66" stroke-width="0.9" fill="none"/>
<!-- 3D adaptive -->
<path d="M413.5,27l4-4h23.5v23l-4,4h-23.5z" fill="#d9d9d9" stroke="#777" stroke-width="0.7"/>
<path d="M413.5,29h23.5v14h-23.5z" fill="#4a9ee0"/>
<path d="M414,49c4-6,3-23,7-23s1,23,5,23s2-23,8-23" fill="none" stroke="#1c3f66" stroke-width="0.9"/>
<!-- 3D pocket dome -->
<ellipse cx="466.3" cy="41" rx="14" ry="6.5" fill="#fafafa" stroke="#888" stroke-width="0.8"/>
<path d="M452.3,39c0-8,6-13,14-13s14,5,14,13c0,4-28,4-28,0z" fill="#4a9ee0" stroke="#3a6e98" stroke-width="0.6"/>
<path d="M459,36c3-6,11-6,14,0c-3,3-11,3-14,0z" fill="none" stroke="#1c3f66" stroke-width="0.9"/>
<path d="M462.5,35l4-4l4,4z" fill="none" stroke="#1c3f66" stroke-width="0.9"/>
<!-- 3D steep -->
<path d="M491.5,44l4-9h22.5v9l-4,6.5h-22.5z" fill="#d9d9d9" stroke="#777" stroke-width="0.7"/>
<path d="M495,44c0-12,3-20,6-20s4,3,5,10c3,5,8,4,12,7l-4,3z" fill="#4a9ee0"/>
<path d="M497,33c3-1,6,0,8,1M495,39c4-1,8,0,11,2M492,44c5-1,10,0,14,3" stroke="#1c3f66" stroke-width="0.8" fill="none"/>
<!-- Drill -->
<path d="M538.5,41l7-8h22l-7,8z" fill="#e8e8e8" stroke="#777" stroke-width="0.7"/>
<path d="M538.5,41v4h22l7-8v-4" fill="#d0d0d0" stroke="#777" stroke-width="0.7"/>
<rect x="549.5" y="23.5" width="8" height="27" rx="3.5" fill="#999" stroke="#666" stroke-width="0.7"/>
<path d="M550,30l7-3M550,36l7-3M550,42l7-3M550,48l7-3" stroke="#555" stroke-width="1"/>
<path d="M549,40v6M558,40v6" stroke="#4a9ee0" stroke-width="1"/>
<!-- Multi-axis -->
<path d="M646,33h15l-6,14z" fill="#4a9ee0"/>
<path d="M655,40l14-8l6,3l-4,9l-10,6z" fill="#d9d9d9" stroke="#888" stroke-width="0.6"/>
<path d="M662,38l8,-3l-5,14z" fill="#4a9ee0"/>
<rect x="655" y="24" width="10" height="8" rx="3" transform="rotate(20 660 28)" fill="#ddd" stroke="#777" stroke-width="0.7"/>
<path d="M655,32l9,3l-4,13l-6-2z" fill="#999" stroke="#666" stroke-width="0.6"/>
<!-- Actions -->
<path d="M788.5,37l12.5-12l12.5,12l-12.5,13z" fill="none" stroke="#2d9af0" stroke-width="1.1"/>
<path d="M794,37l7-6.5l7,6.5l-7,7z" fill="none" stroke="#2d9af0" stroke-width="1"/>
<rect x="801.5" y="23.5" width="7" height="17" rx="3" fill="#999" stroke="#666" stroke-width="0.7"/>
<path d="M802,29l6-2M802,33l6-2M802,37l6-2" stroke="#555" stroke-width="0.9"/>
<!-- G1G2 -->
<rect x="826.5" y="23.5" width="24" height="28" fill="#fafafa" stroke="#666" stroke-width="1"/>
<text x="830" y="36.3" font-family="Liberation Mono" font-weight="bold" font-size="11" fill="#1e8fe0" textLength="17" lengthAdjust="spacingAndGlyphs">G1</text>
<text x="830" y="47.8" font-family="Liberation Mono" font-weight="bold" font-size="11" fill="#1e8fe0" textLength="17" lengthAdjust="spacingAndGlyphs">G2</text>
<!-- Doc -->
<rect x="867" y="24.5" width="21.5" height="26" fill="#fafafa" stroke="#777" stroke-width="1"/>
<rect x="872" y="28" width="11.5" height="4" fill="none" stroke="#888" stroke-width="0.9"/>
<path d="M870,37h15M870,41.5h15M870,46h15" stroke="#888" stroke-width="0.9"/>
<!-- tool library -->
<rect x="912" y="23" width="9" height="7" fill="#ddd" stroke="#999" stroke-width="0.6"/>
<path d="M916.5,30v16" stroke="#777" stroke-width="0.8"/><circle cx="916.5" cy="47" r="1.6" fill="#e02a2a"/>
<rect x="923" y="27" width="8" height="20" fill="#c9c9c9" stroke="#aaa" stroke-width="0.5"/>
<path d="M919,42l7-2l-2,8l-6,1z" fill="#f0a000"/>
<rect x="929" y="31" width="11" height="6" fill="#ccc" stroke="#888" stroke-width="0.6"/>
<rect x="932" y="37" width="6" height="14" fill="#a8a8a8" stroke="#777" stroke-width="0.6"/>
<!-- machine -->
<rect x="950.5" y="27" width="30" height="21" rx="4" fill="#e3e3e3" stroke="#888" stroke-width="0.8"/>
<rect x="950.5" y="45" width="30" height="3.5" fill="#2a5f8f"/>
<rect x="958" y="30" width="15" height="14" fill="#7fb3e6"/><rect x="961" y="33" width="7" height="5" fill="#c8dcf0" stroke="#5a86b3" stroke-width="0.6"/>
<circle cx="972" cy="39" r="1.2" fill="#d02a60"/>
<!-- G doc stack -->
<path d="M991.5,23.5h14v24h-14z" fill="#f5f5f5" stroke="#777" stroke-width="0.8"/>
<path d="M994,25.5h14v24h-14z" fill="#f5f5f5" stroke="#777" stroke-width="0.8"/>
<path d="M997,28h14l5,5v19h-19z" fill="#fafafa" stroke="#666" stroke-width="0.8"/>
<path d="M1011,28v5h5z" fill="#555"/>
<text x="1001.5" y="46.5" font-family="Liberation Sans" font-weight="bold" font-size="10" fill="#1e8fe0">G</text>
<!-- S doc stack -->
<path d="M1030,23.5h14v24h-14z" fill="#f5f5f5" stroke="#777" stroke-width="0.8"/>
<path d="M1032.5,25.5h14v24h-14z" fill="#f5f5f5" stroke="#777" stroke-width="0.8"/>
<path d="M1035.5,28h14l5,5v19h-19z" fill="#fafafa" stroke="#666" stroke-width="0.8"/>
<path d="M1049.5,28v5h5z" fill="#555"/>
<path d="M1052,40.5l-8.5-4.5c-2.5-1.3-1,-4 1.5,-2.8l0,0M1040,41l8.5,4.5c2.5,1.3,1,4 -1.5,2.8M1043.5,36c-2.5,-1.3 -4,1.5 -1.5,2.8l8.5,4.5c2.5,1.3 4,-1.5 1.5,-2.8" fill="none" stroke="#1e8fe0" stroke-width="1.1"/>
<!-- ruler -->
<path d="M1088.5,31v8M1114.5,31v8M1089,35h25" stroke="#555" stroke-width="0.9"/>
<path d="M1089,35l3-2v4zM1114,35l-3-2v4z" fill="#555"/>
<rect x="1088.5" y="40" width="26" height="6" fill="#f0a81e"/>
<path d="M1091,40v2.5M1094,40v2.5M1097,40v2.5M1100,40v2.5M1103,40v2.5M1106,40v2.5M1109,40v2.5M1112,40v2.5" stroke="#a06a00" stroke-width="0.6"/>
<!-- select -->
<rect x="1154" y="20.7" width="34.4" height="34" fill="#0a96d8"/>
<rect x="1157.5" y="24" width="26" height="19" fill="none" stroke="#8fe08f" stroke-width="1" stroke-dasharray="2.2,1.6"/>
<path d="M1175,37v13l3-3l2.5,5l2-1l-2.5-5h4z" fill="#fff" stroke="#ddd" stroke-width="0.4"/>
</svg>

<!-- Browser panel -->
<div class="bp" style="left:2.5px;top:75.8px;width:269.5px;height:23px;border-color:#d4d4d4;border-bottom-width:1.5px"></div>
<div style="position:absolute;left:7px;top:84px;font-size:8px;color:#444;line-height:8px;letter-spacing:-2px">◀◀</div>
<div style="position:absolute;left:253.5px;top:83px;width:8.5px;height:8.5px;border-radius:50%;background:#2b2b2b"></div>
<div style="position:absolute;left:256px;top:86.8px;width:3.5px;height:1px;background:#eee"></div>
<div style="position:absolute;left:267.9px;top:82.7px;width:1.1px;height:9.7px;background:#6a6a6a;border-radius:1px"></div><div style="position:absolute;left:270.2px;top:84.5px;width:0.9px;height:6.5px;background:#aaa"></div>

<div class="row" style="left:35px;top:103.6px;width:149.6px"></div>
<div class="row" style="left:51.4px;top:125.1px;width:87.8px"></div>
<div class="row" style="left:51.4px;top:146.7px;width:102.2px"></div>
<div class="row" style="left:51.4px;top:168px;width:95.9px"></div>
<div class="row" style="left:51.4px;top:189.5px;width:69.6px"></div>
<div class="row" style="left:67px;top:211.5px;width:23px;background:rgba(240,240,240,0.7)"></div>
<div class="row" style="left:90.3px;top:211.2px;width:50.7px;height:17.4px;background:#b3d2f7"></div>
<div class="row" style="left:141px;top:211.5px;width:23px;background:rgba(240,240,240,0.9)"></div>
<div class="row" style="left:83.4px;top:233.5px;width:22px;height:17.2px"></div>
<div class="row" style="left:105.6px;top:233.5px;width:121px;height:17.2px;background:#0696d7"></div>


<svg class="ic" style="left:0;top:96px" width="272" height="160" viewBox="0 96 272 160">
<!-- row1 triangle -->
<path d="M19.5,115.9L26.4,108.9V115.9Z" fill="#333"/>
<!-- eye -->
<path d="M37.5,112.4c4-6,11-6,15,0c-4,6-11,6-15,0z" fill="#9a9a9a"/><circle cx="45" cy="112.4" r="2.4" fill="#e8e8e8"/><circle cx="45" cy="112.4" r="1.1" fill="#9a9a9a"/>
<!-- component -->
<g stroke="#8a9098" stroke-width="0.7"><path d="M61.5,108.5l1.5-1.5h4l0,11.5h-5.5z" fill="#d3d9e0"/><path d="M63,107h4v11.5" fill="none"/><path d="M66.5,113.5l1.5-1.5h5v6.5h-6.5z" fill="#c9d0d8"/></g>
<!-- units doc -->
<path d="M54.5,125.8h8l4,4v9h-12z" fill="#f4f6f8" stroke="#8a8f96" stroke-width="0.7"/>
<rect x="54" y="138" width="13.5" height="2.6" rx="1" fill="#e8a820"/>
<!-- named views -->
<path d="M36.2,150.6L41.7,155.5L36.2,160.4Z" fill="none" stroke="#444" stroke-width="0.9"/>
<path d="M54,150h5l1,1.5h8.5v10h-14.5z" fill="#8e8e8e"/>
<!-- models -->
<path d="M36.2,172.5L41.7,177L36.2,181.5Z" fill="none" stroke="#444" stroke-width="0.9"/>
<path d="M54.5,177c4-6,11-6,15,0c-4,6-11,6-15,0z" fill="#9a9a9a"/><circle cx="62" cy="177" r="2.4" fill="#e8e8e8"/><circle cx="62" cy="177" r="1.1" fill="#9a9a9a"/>
<g stroke="#8a9098" stroke-width="0.7"><path d="M76.8,173l1.5-1.5h4l0,11.5h-5.5z" fill="#d3d9e0"/><path d="M78.3,171.5h4v11.5" fill="none"/><path d="M81.8,178l1.5-1.5h5v6.5h-6.5z" fill="#c9d0d8"/></g>
<!-- setups -->
<path d="M35.6,202L42.3,195V202Z" fill="#333"/>
<path d="M53,193.5h5l1,1.5h6v3" fill="none" stroke="#777" stroke-width="0.7"/>
<path d="M53,193.5v10h11l3-6h-11l-3,6" fill="#f2f6fa" stroke="#777" stroke-width="0.7"/>
<path d="M58,199h8l-2,4h-8z" fill="#9cc3ea"/>
<path d="M52.5,205.4l2.2,-2.2M57.4,205.4l2.2,-2.2M62.3,205.4l2.2,-2.2M67.2,205.4l2.2,-2.2M72.1,205.4l2.2,-2.2M77.0,205.4l2.2,-2.2M81.9,205.4l2.2,-2.2M86.8,205.4l2.2,-2.2M91.7,205.4l2.2,-2.2M96.6,205.4l2.2,-2.2M101.5,205.4l2.2,-2.2M106.4,205.4l2.2,-2.2M111.3,205.4l2.2,-2.2M116.2,205.4l2.2,-2.2" stroke="#6b86ab" stroke-width="1.5" stroke-linecap="round" fill="none"/>
<!-- setup1 -->
<path d="M51.4,223L58.4,216V223Z" fill="#333"/>
<path d="M69,215.5h5l1,1.5h6v3" fill="none" stroke="#777" stroke-width="0.7"/>
<path d="M69,215.5v10h11l3-6h-11l-3,6" fill="#f2f6fa" stroke="#777" stroke-width="0.7"/>
<path d="M74,221h8l-2,4h-8z" fill="#9cc3ea"/>
<path d="M68.5,228.2l2.2,-2.2M73.4,228.2l2.2,-2.2M78.3,228.2l2.2,-2.2M83.2,228.2l2.2,-2.2M88.1,228.2l2.2,-2.2M93.0,228.2l2.2,-2.2M97.9,228.2l2.2,-2.2M102.8,228.2l2.2,-2.2M107.7,228.2l2.2,-2.2M112.6,228.2l2.2,-2.2M117.5,228.2l2.2,-2.2M122.4,228.2l2.2,-2.2M127.3,228.2l2.2,-2.2M132.2,228.2l2.2,-2.2M137.1,228.2l2.2,-2.2" stroke="#6b86ab" stroke-width="1.5" stroke-linecap="round" fill="none"/>
<circle cx="150.8" cy="219.7" r="5.6" fill="#ececec" stroke="#8a8a8a" stroke-width="0.9"/><circle cx="150.8" cy="219.7" r="4" fill="#d9d9d9"/><circle cx="150.8" cy="219.7" r="1.9" fill="#333"/>
<!-- profile row -->
<path d="M68.1,236.8L73.7,241.6L68.1,246.5Z" fill="none" stroke="#444" stroke-width="0.9"/>
<path d="M87.5,241.5c4-5,9-5,12.5,0c-4,5-9,5-12.5,0z" fill="#dcdcdc"/><path d="M88,236.5l11,10" stroke="#d0d0d0" stroke-width="1.2"/>
<rect x="114" y="234.9" width="4.6" height="4.5" fill="#f4f4f4" stroke="#bbb" stroke-width="0.4"/><path d="M109.3,238.6h4.7M118.6,238.6h4.2" stroke="#5a7a9a" stroke-width="0.8"/><path d="M116.3,239.5v8" stroke="#8a5a6a" stroke-width="1"/><path d="M109.3,247.8h13.5" stroke="#4a6a8a" stroke-width="1.2"/>
</svg>

<!-- Comments panel -->
<div class="bp" style="left:2.8px;top:802.9px;width:268.7px;height:21.5px"></div>
<div style="position:absolute;left:253.5px;top:809.7px;width:8px;height:8px;border-radius:50%;background:#2b2b2b"></div>
<div style="position:absolute;left:255.5px;top:813.2px;width:4px;height:1px;background:#eee"></div>
<div style="position:absolute;left:257px;top:811.6px;width:1px;height:4px;background:#eee"></div>
<div style="position:absolute;left:268.5px;top:808px;width:1px;height:12px;background:#777"></div>

<!-- nav bar -->
<div style="position:absolute;left:657px;top:802px;width:296px;height:21px;background:#f0f0f0;border-radius:1px"></div>
<svg class="ic" style="left:650px;top:800px" width="310" height="27" viewBox="650 800 310 27">
<g stroke="#555" stroke-width="0.9" fill="#f8f8f8">
<path d="M665,804v16M660,812h10M662,808l3-4l3,4"/>
<path d="M668,812l1.5,-1.5v3z"/>
</g>
<path d="M678,811l3,3l3-3z" fill="#333"/>
<rect x="690" y="808" width="12" height="9" fill="#bfc8d0" stroke="#666" stroke-width="0.8"/><path d="M690,811h12M693,806h7v2" stroke="#666" stroke-width="0.8" fill="none"/>
<path d="M713,819c-2-3-3-6-2-8l1-1v-4l1,0v4l1-5l1,0v5l1-5l1,0v5l1-4l1,0v5l1-2l1,1l-2,8z" fill="#f8f8f8" stroke="#444" stroke-width="0.8"/>
<circle cx="741" cy="810.5" r="4.5" fill="#eef" stroke="#333" stroke-width="1.1"/><path d="M744,814l4,4" stroke="#333" stroke-width="2"/>
<rect x="759" y="804" width="12" height="13" fill="none" stroke="#888" stroke-width="0.8" stroke-dasharray="1.5,1"/>
<circle cx="765.5" cy="811" r="4.3" fill="#eef" stroke="#333" stroke-width="1.1"/><path d="M768.5,814l4,4" stroke="#333" stroke-width="2"/>
<path d="M779,811l3,3l3-3z" fill="#333"/>
<rect x="789" y="804" width="13" height="10" fill="#7aa9e8" stroke="#555" stroke-width="0.8"/><path d="M795.5,814v3M791,818h9" stroke="#555" stroke-width="1"/>
<path d="M806,811l3,3l3-3z" fill="#333"/>
<rect x="817" y="804" width="12" height="12" fill="#c0c0c0" stroke="#444" stroke-width="0.8"/>
<path d="M820,804v12M823,804v12M826,804v12M817,807h12M817,810h12M817,813h12" stroke="#444" stroke-width="0.6"/>
<path d="M833,811l3,3l3-3z" fill="#333"/>
<path d="M845,807l3-3h8v9l-3,3h-8z" fill="#f4f4f4" stroke="#444" stroke-width="0.8"/><circle cx="849" cy="812" r="3" fill="#aab" stroke="#444" stroke-width="0.6"/>
<path d="M861,811l3,3l3-3z" fill="#333"/>
<path d="M873,806h13v3h-13zM873,810h13v3h-13zM873,814h13v3h-13z" fill="#7aa9e8" stroke="#333" stroke-width="0.7"/>
<path d="M888,811l3,3l3-3z" fill="#333"/>
<path d="M901,810a6,6 0 0 1 11,-2M912,814a6,6 0 0 1 -11,2" fill="none" stroke="#1c4ea8" stroke-width="1.5"/>
<path d="M912,804v4h-4zM901,820v-4h4z" fill="#1c4ea8"/>
<path d="M916,811l3,3l3-3z" fill="#333"/>
<path d="M929,812l6-6l6,6l-6,6z" fill="#4a90e0"/><path d="M929,812l6,6l6-6l-6,2z" fill="#2a6ec0"/>
<path d="M944,811l3,3l3-3z" fill="#333"/>
</svg>


<div style="position:absolute;left:-3px;top:822px;width:6px;height:8px;border-radius:50%;background:#111"></div>
<div style="position:absolute;left:134.50px;top:3.79px;font-size:10.8px;line-height:10.8px;white-space:nowrap;color:#1b90d6;font-weight:bold;transform:scaleX(0.940);transform-origin:0 0;">MILLING</div>
<div style="position:absolute;left:217.70px;top:3.79px;font-size:10.8px;line-height:10.8px;white-space:nowrap;color:#3b3b3b;transform:scaleX(0.886);transform-origin:0 0;-webkit-text-stroke:0.08px #3b3b3b;">TURNING</div>
<div style="position:absolute;left:301.25px;top:3.79px;font-size:10.8px;line-height:10.8px;white-space:nowrap;color:#3b3b3b;transform:scaleX(0.903);transform-origin:0 0;-webkit-text-stroke:0.08px #3b3b3b;">ADDITIVE</div>
<div style="position:absolute;left:389.50px;top:3.79px;font-size:10.8px;line-height:10.8px;white-space:nowrap;color:#3b3b3b;transform:scaleX(0.852);transform-origin:0 0;-webkit-text-stroke:0.08px #3b3b3b;">INSPECTION</div>
<div style="position:absolute;left:487.00px;top:3.79px;font-size:10.8px;line-height:10.8px;white-space:nowrap;color:#3b3b3b;transform:scaleX(0.892);transform-origin:0 0;-webkit-text-stroke:0.08px #3b3b3b;">FABRICATION</div>
<div style="position:absolute;left:592.50px;top:3.79px;font-size:10.8px;line-height:10.8px;white-space:nowrap;color:#3b3b3b;transform:scaleX(0.868);transform-origin:0 0;-webkit-text-stroke:0.08px #3b3b3b;">UTILITIES</div>
<div style="position:absolute;left:135.30px;top:58.34px;font-size:10.8px;line-height:10.8px;white-space:nowrap;color:#333;transform:scaleX(0.814);transform-origin:0 0;-webkit-text-stroke:0.08px #333;">SETUP</div>
<svg style="position:absolute;left:166.90px;top:61.00px" width="5.30" height="3.70" viewBox="0 0 5.30 3.70"><polygon points="0,0 5.30,0 2.65,3.70" fill="#333"/></svg>
<div style="position:absolute;left:250.70px;top:58.34px;font-size:10.8px;line-height:10.8px;white-space:nowrap;color:#333;transform:scaleX(0.884);transform-origin:0 0;-webkit-text-stroke:0.08px #333;">2D</div>
<svg style="position:absolute;left:265.20px;top:61.00px" width="5.30" height="3.70" viewBox="0 0 5.30 3.70"><polygon points="0,0 5.30,0 2.65,3.70" fill="#333"/></svg>
<div style="position:absolute;left:415.00px;top:58.34px;font-size:10.8px;line-height:10.8px;white-space:nowrap;color:#333;transform:scaleX(0.974);transform-origin:0 0;-webkit-text-stroke:0.08px #333;">3D</div>
<svg style="position:absolute;left:430.75px;top:61.00px" width="5.30" height="3.70" viewBox="0 0 5.30 3.70"><polygon points="0,0 5.30,0 2.65,3.70" fill="#333"/></svg>
<div style="position:absolute;left:543.75px;top:58.34px;font-size:10.8px;line-height:10.8px;white-space:nowrap;color:#333;transform:scaleX(0.872);transform-origin:0 0;-webkit-text-stroke:0.08px #333;">DRILLING</div>
<svg style="position:absolute;left:589.50px;top:61.00px" width="5.30" height="3.70" viewBox="0 0 5.30 3.70"><polygon points="0,0 5.30,0 2.65,3.70" fill="#333"/></svg>
<div style="position:absolute;left:627.50px;top:58.34px;font-size:10.8px;line-height:10.8px;white-space:nowrap;color:#333;transform:scaleX(0.936);transform-origin:0 0;-webkit-text-stroke:0.08px #333;">MULTI-AXIS</div>
<svg style="position:absolute;left:685.75px;top:61.00px" width="5.30" height="3.70" viewBox="0 0 5.30 3.70"><polygon points="0,0 5.30,0 2.65,3.70" fill="#333"/></svg>
<div style="position:absolute;left:717.50px;top:58.34px;font-size:10.8px;line-height:10.8px;white-space:nowrap;color:#333;transform:scaleX(0.886);transform-origin:0 0;-webkit-text-stroke:0.08px #333;">MODIFY</div>
<svg style="position:absolute;left:757.00px;top:61.00px" width="5.30" height="3.70" viewBox="0 0 5.30 3.70"><polygon points="0,0 5.30,0 2.65,3.70" fill="#333"/></svg>
<div style="position:absolute;left:811.75px;top:58.34px;font-size:10.8px;line-height:10.8px;white-space:nowrap;color:#333;transform:scaleX(0.884);transform-origin:0 0;-webkit-text-stroke:0.08px #333;">ACTIONS</div>
<svg style="position:absolute;left:856.50px;top:61.00px" width="5.30" height="3.70" viewBox="0 0 5.30 3.70"><polygon points="0,0 5.30,0 2.65,3.70" fill="#333"/></svg>
<div style="position:absolute;left:956.40px;top:58.34px;font-size:10.8px;line-height:10.8px;white-space:nowrap;color:#333;transform:scaleX(0.872);transform-origin:0 0;-webkit-text-stroke:0.08px #333;">MANAGE</div>
<svg style="position:absolute;left:999.50px;top:61.00px" width="5.30" height="3.70" viewBox="0 0 5.30 3.70"><polygon points="0,0 5.30,0 2.65,3.70" fill="#333"/></svg>
<div style="position:absolute;left:1078.60px;top:58.34px;font-size:10.8px;line-height:10.8px;white-space:nowrap;color:#333;transform:scaleX(0.840);transform-origin:0 0;-webkit-text-stroke:0.08px #333;">INSPECT</div>
<svg style="position:absolute;left:1120.20px;top:61.00px" width="5.30" height="3.70" viewBox="0 0 5.30 3.70"><polygon points="0,0 5.30,0 2.65,3.70" fill="#333"/></svg>
<div style="position:absolute;left:1149.60px;top:58.34px;font-size:10.8px;line-height:10.8px;white-space:nowrap;color:#333;transform:scaleX(0.826);transform-origin:0 0;-webkit-text-stroke:0.08px #333;">SELECT</div>
<svg style="position:absolute;left:1186.60px;top:61.00px" width="5.30" height="3.70" viewBox="0 0 5.30 3.70"><polygon points="0,0 5.30,0 2.65,3.70" fill="#333"/></svg>
<div style="position:absolute;left:15.70px;top:30.73px;font-size:10.2px;line-height:10.2px;white-space:nowrap;color:#3a3a3a;font-weight:bold;transform:scaleX(0.983);transform-origin:0 0;">MANUFACTURE</div>
<svg style="position:absolute;left:97.20px;top:34.00px" width="5.20" height="3.60" viewBox="0 0 5.20 3.60"><polygon points="0,0 5.20,0 2.60,3.60" fill="#3a3a3a"/></svg>
<div style="position:absolute;left:25.40px;top:82.18px;font-size:10.2px;line-height:10.2px;white-space:nowrap;color:#575757;transform:scaleX(0.839);transform-origin:0 0;-webkit-text-stroke:0.08px #575757;">BROWSER</div>
<div style="position:absolute;left:25.30px;top:808.83px;font-size:10.2px;line-height:10.2px;white-space:nowrap;color:#575757;transform:scaleX(0.924);transform-origin:0 0;-webkit-text-stroke:0.08px #575757;">COMMENTS</div>
<div style="position:absolute;left:87.50px;top:107.19px;font-size:10.8px;line-height:10.8px;white-space:nowrap;color:#383838;transform:scaleX(0.970);transform-origin:0 0;-webkit-text-stroke:0.08px #383838;">Cell Phone Tray v8</div>
<div style="position:absolute;left:81.80px;top:128.79px;font-size:10.8px;line-height:10.8px;white-space:nowrap;color:#383838;transform:scaleX(0.981);transform-origin:0 0;-webkit-text-stroke:0.08px #383838;">Units: mm</div>
<div style="position:absolute;left:81.80px;top:150.09px;font-size:10.8px;line-height:10.8px;white-space:nowrap;color:#383838;transform:scaleX(0.942);transform-origin:0 0;-webkit-text-stroke:0.08px #383838;">Named Views</div>
<div style="position:absolute;left:103.60px;top:171.79px;font-size:10.8px;line-height:10.8px;white-space:nowrap;color:#383838;transform:scaleX(0.956);transform-origin:0 0;-webkit-text-stroke:0.08px #383838;">Models</div>
<div style="position:absolute;left:80.60px;top:193.49px;font-size:10.8px;line-height:10.8px;white-space:nowrap;color:#383838;transform:scaleX(0.952);transform-origin:0 0;-webkit-text-stroke:0.08px #383838;">Setups</div>
<div style="position:absolute;left:96.50px;top:214.89px;font-size:10.8px;line-height:10.8px;white-space:nowrap;color:#1b2f6a;font-weight:bold;transform:scaleX(0.950);transform-origin:0 0;">Setup1</div>
<div style="position:absolute;left:136.20px;top:236.59px;font-size:10.8px;line-height:10.8px;white-space:nowrap;color:#ffffff;font-weight:bold;transform:scaleX(1.001);transform-origin:0 0;">[T1] 2D Profile1</div>
<div style="position:absolute;left:1528.75px;top:811.69px;font-size:10.8px;line-height:10.8px;white-space:nowrap;color:#2a2a2a;font-weight:bold;transform:scaleX(0.975);transform-origin:0 0;">2D Profile1</div>
</body></html>
